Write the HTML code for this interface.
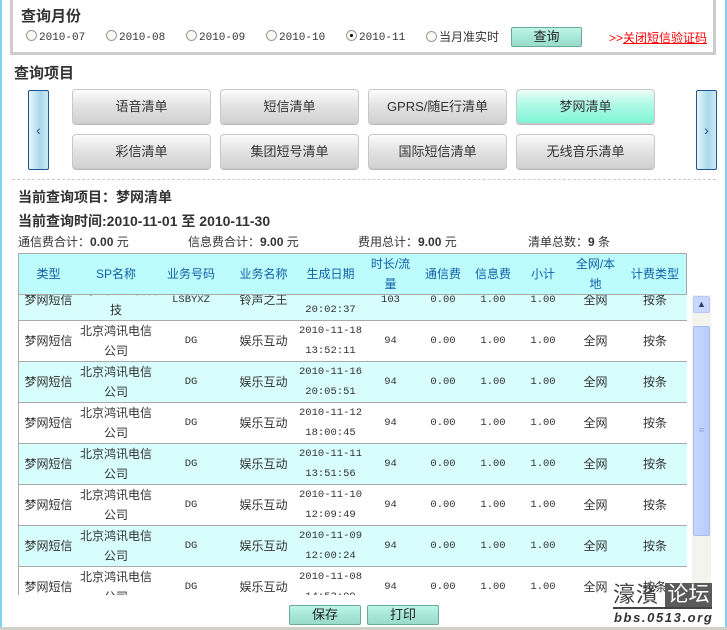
<!DOCTYPE html>
<html><head><meta charset="utf-8">
<style>
*{margin:0;padding:0;box-sizing:border-box}
body{width:727px;height:630px;position:relative;overflow:hidden;background:#fff;font-family:"Liberation Sans","Noto Sans CJK SC","WenQuanYi Zen Hei",sans-serif;font-size:12px;color:#333}
.a{position:absolute}
.m{font-family:"Liberation Mono","Noto Sans CJK SC",monospace;font-size:11px}
.lb{left:0;top:0;width:2px;height:627px;background:#7fd4f0}
.rb{left:725px;top:0;width:2px;height:627px;background:#7fd4f0}
.bot{left:0;top:627px;width:727px;height:3px;background:#d0d0c8}
.box{left:10px;top:-4px;width:706px;height:59px;border:3px solid #cccccc}
h3{font-size:15px;font-weight:bold;color:#333}
.r{display:inline-block;width:11px;height:11px;border:1px solid #999;border-radius:50%;vertical-align:-1px;background:#fafaf5;margin-right:2px;position:relative}
.r.on:after{content:"";position:absolute;left:3px;top:3px;width:3px;height:3px;background:#000;border-radius:50%}
.gbtn{background:linear-gradient(#bdf6e6,#a5e6d6 55%,#9adcca);border:1px solid #6aaa98;border-radius:2px;text-align:center;color:#222;font-size:13px;line-height:18px}
.tb{width:139px;height:35px;border:1px solid #c8c8c8;border-radius:4px;background:linear-gradient(#fcfcfc,#e4e4e4 45%,#d2d2d2);text-align:center;line-height:33px;font-size:13px;color:#333;box-shadow:0 1px 0 #bbb}
.arr{width:21px;height:80px;border:1px solid #1f5590;background:linear-gradient(90deg,#e8f6fb,#a9d8e8 60%,#cdeaf4);color:#1f4f8f;font-size:14px;text-align:center;line-height:78px;border-radius:2px}
.row{position:absolute;left:18px;width:669px;border-bottom:1px solid #aaa}
.c{position:absolute;top:0;height:100%;display:flex;align-items:center;justify-content:center;text-align:center;line-height:20px;font-size:12px;color:#333}
.c span{white-space:nowrap;display:block;line-height:20px}
.c.m{font-size:10.5px}
</style></head><body>
<div class="a lb"></div><div class="a rb"></div><div class="a bot"></div>
<div class="a box"></div>
<h3 class="a" style="left:21px;top:5px">查询月份</h3>
<div class="a m" style="left:26px;top:30px;white-space:nowrap">
<span class="a" style="left:0"><span class="r"></span>2010-07</span>
<span class="a" style="left:80px"><span class="r"></span>2010-08</span>
<span class="a" style="left:160px"><span class="r"></span>2010-09</span>
<span class="a" style="left:240px"><span class="r"></span>2010-10</span>
<span class="a" style="left:320px"><span class="r on"></span>2010-11</span>
<span class="a" style="left:400px;font-size:12px;font-family:'Noto Sans CJK SC',sans-serif;top:-2px"><span class="r"></span>当月准实时</span>
</div>
<div class="a gbtn" style="left:511px;top:27px;width:71px;height:20px">查询</div>
<div class="a" style="left:609px;top:29px;color:#f00;font-size:12px">&gt;&gt;<u>关闭短信验证码</u></div>
<h3 class="a" style="left:14px;top:62px">查询项目</h3>
<div class="a arr" style="left:28px;top:90px">‹</div>
<div class="a arr" style="left:696px;top:90px">›</div>
<div class="a tb" style="left:72px;top:89px">语音清单</div>
<div class="a tb" style="left:220px;top:89px">短信清单</div>
<div class="a tb" style="left:368px;top:89px">GPRS/随E行清单</div>
<div class="a tb" style="left:516px;top:89px;background:linear-gradient(#ecfdf7,#aefae6 45%,#80f4d8)">梦网清单</div>
<div class="a tb" style="left:72px;top:134px">彩信清单</div>
<div class="a tb" style="left:220px;top:134px">集团短号清单</div>
<div class="a tb" style="left:368px;top:134px">国际短信清单</div>
<div class="a tb" style="left:516px;top:134px">无线音乐清单</div>
<div class="a" style="left:12px;top:179px;width:704px;border-top:1px dashed #ccc"></div>
<h3 class="a" style="left:18px;top:187px;font-size:14px">当前查询项目：梦网清单</h3>
<h3 class="a" style="left:18px;top:211px;font-size:14px">当前查询时间:2010-11-01 至 2010-11-30</h3>
<div class="a" style="left:18px;top:233px;white-space:nowrap">通信费合计：<b>0.00</b> 元</div>
<div class="a" style="left:188px;top:233px;white-space:nowrap">信息费合计：<b>9.00</b> 元</div>
<div class="a" style="left:358px;top:233px;white-space:nowrap">费用总计：<b>9.00</b> 元</div>
<div class="a" style="left:528px;top:233px;white-space:nowrap">清单总数：<b>9</b> 条</div>
<div class="a" style="left:18px;top:253px;width:669px;height:42px;background:#bdfcfc;border:1px solid #aaa"></div>
<div id="hd"></div>
<div class="a" style="left:0;top:295px;width:690px;height:300px;overflow:hidden" id="bd"></div>
<div class="a" style="left:18px;top:253px;width:1px;height:342px;background:#aaa"></div>
<div class="a" style="left:692px;top:295px;width:19px;height:305px;background:#f4f4ee"></div>
<div class="a" style="left:693px;top:296px;width:17px;height:17px;border:1px solid #b8c8f0;border-radius:2px;background:#c8d8fc;font-size:9px;text-align:center;line-height:15px;color:#2a3e70">▲</div>
<div class="a" style="left:693px;top:326px;width:17px;height:210px;border:1px solid #a8bcf0;border-radius:2px;background:linear-gradient(90deg,#c6d6fc,#b8ccfa);color:#8aa0e0;font-size:9px;text-align:center;line-height:206px">≡</div>
<div class="a gbtn" style="left:289px;top:605px;width:72px;height:20px">保存</div>
<div class="a gbtn" style="left:367px;top:605px;width:72px;height:20px">打印</div>
<div class="a" style="left:613px;top:582px;font-size:22px;color:#444;letter-spacing:1px;line-height:25px">濠濱</div>
<div class="a" style="left:665px;top:583px;width:47px;height:24px;background:#5a5a5a;color:#fff;font-size:21px;line-height:24px;text-align:center">论坛</div>
<div class="a" style="left:613px;top:607px;width:99px;height:2px;background:#444"></div>
<div class="a" style="left:614px;top:610px;font-size:13px;font-weight:bold;font-style:italic;color:#333;letter-spacing:1.6px">bbs.0513.org</div>
<script>
var L=[18,79,153,229,298,363,418,468,518,568,623,687];
var MONO={2:1,4:1,5:1,6:1,7:1,8:1};
function cells(v,col,num){var s='';for(var i=0;i<11;i++){s+='<div class="c'+(num&&MONO[i]?' m':'')+'" style="left:'+(L[i]-18)+'px;width:'+(L[i+1]-L[i])+'px;'+(col?'color:'+col:'')+'"><span>'+v[i]+'</span></div>';}return s;}
document.getElementById('hd').innerHTML='<div class="row" style="top:253px;height:42px;border:none">'+cells(['类型','SP名称','业务号码','业务名称','生成日期','时长/流<br>量','通信费','信息费','小计','全网/本<br>地','计费类型'],'#1260a8',false)+'</div>';
var rows=[['LSBYXZ','铃声之王','2010-11-20<br>20:02:37','103','北京鸿讯电信科<br>技'],
['DG','娱乐互动','2010-11-18<br>13:52:11','94'],['DG','娱乐互动','2010-11-16<br>20:05:51','94'],['DG','娱乐互动','2010-11-12<br>18:00:45','94'],['DG','娱乐互动','2010-11-11<br>13:51:56','94'],['DG','娱乐互动','2010-11-10<br>12:09:49','94'],['DG','娱乐互动','2010-11-09<br>12:00:24','94'],['DG','娱乐互动','2010-11-08<br>14:53:09','94']];
var h='',ty=-15;
for(var k=0;k<rows.length;k++){var r=rows[k];var sp=r[4]||'北京鸿讯电信<br>公司';
h+='<div class="row" style="top:'+ty+'px;height:41px;background:'+(k%2==0?'#d8fdfd':'#fff')+'">'+cells(['梦网短信',sp,r[0],r[1],r[2],r[3],'0.00','1.00','1.00','全网','按条'],'',true)+'</div>';ty+=41;}
document.getElementById('bd').innerHTML=h;
</script>
</body></html>
